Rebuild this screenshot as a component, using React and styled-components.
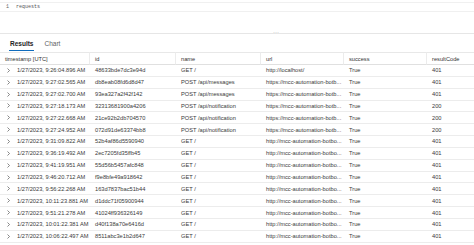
import React from "react";
import styled, { createGlobalStyle } from "styled-components";

const Global = createGlobalStyle`
  html, body { margin: 0; padding: 0; background: #fff; }
  body { font-family: "Liberation Sans", Arial, sans-serif; color: #242424; }
`;

const Page = styled.div`
  width: 474px;
  height: 245px;
  overflow: hidden;
  display: flex;
  flex-direction: column;
  background: #fff;
`;

const Editor = styled.div`
  height: 33px;
  padding-top: 2px;
  box-sizing: border-box;
`;

const EditorLine = styled.div`
  display: flex;
  align-items: center;
  height: 8px;
  border-top: 1px solid #f0f0f0;
  border-bottom: 1px solid #f0f0f0;
  font-family: "Liberation Mono", monospace;
  font-size: 5px;
  color: #555;
`;

const LineNo = styled.span`
  flex: 0 0 16px;
  padding-left: 6px;
  box-sizing: border-box;
  color: #666;
`;

const Splitter = styled.div`
  position: relative;
  height: 1px;
  background: #e6e6e6;
`;

const Grip = styled.span`
  position: absolute;
  left: 273px;
  top: -4px;
  font-size: 6px;
  color: #999;
`;

const Tabs = styled.div`
  display: flex;
  gap: 9px;
  padding: 5px 0 0 9px;
  height: 17px;
  box-sizing: border-box;
`;

const Tab = styled.div`
  font-size: 6.5px;
  font-weight: ${(p) => (p.$active ? 700 : 400)};
  color: ${(p) => (p.$active ? "#242424" : "#616161")};
  padding: 0 1px 3px;
  height: 12px;
  box-sizing: border-box;
  border-bottom: 1.5px solid ${(p) => (p.$active ? "#0f6cbd" : "transparent")};
  display: flex;
  align-items: center;
`;

const Table = styled.div`
  display: grid;
  grid-template-columns: 90px 86px 85px 83px 83px 47px;
  font-size: 5.7px;
  margin-top: 1px;
`;

const HeadCell = styled.div`
  height: 13px;
  display: flex;
  align-items: center;
  padding-left: 5px;
  border-top: 1px solid #e8e8e8;
  border-bottom: 1px solid #e0e0e0;
  border-right: ${(p) => (p.$last ? "none" : "1px solid #ececec")};
  box-sizing: border-box;
  color: #333;
  white-space: nowrap;
`;

const Cell = styled.div`
  height: 11.85px;
  display: flex;
  align-items: center;
  padding-left: ${(p) => (p.$first ? "7px" : "5px")};
  border-bottom: 1px solid #ececec;
  box-sizing: border-box;
  color: #3a3a3a;
  white-space: nowrap;
  overflow: hidden;
`;

const Chevron = styled.svg`
  width: 3px;
  height: 5px;
  margin-right: 7px;
  flex: 0 0 auto;
`;

const rows = [
  ["1/27/2023, 9:26:04.896 AM", "48633bde7dc3e94d", "GET /", "http://localhost/", "401"],
  ["1/27/2023, 9:27:02.565 AM", "db8eab08fd6d8d47", "POST /api/messages", "https://mcc-automation-botb...", "401"],
  ["1/27/2023, 9:27:02.700 AM", "93ea327a2f42f142", "POST /api/messages", "https://mcc-automation-botb...", "401"],
  ["1/27/2023, 9:27:18.173 AM", "32313681900a4206", "POST /api/notification", "https://mcc-automation-botb...", "200"],
  ["1/27/2023, 9:27:22.668 AM", "21ce92b2db704570", "POST /api/notification", "https://mcc-automation-botb...", "200"],
  ["1/27/2023, 9:27:24.952 AM", "072d91de63374bb8", "POST /api/notification", "https://mcc-automation-botb...", "200"],
  ["1/27/2023, 9:31:09.822 AM", "52b4af86d5590940", "GET /", "http://mcc-automation-botbo...", "401"],
  ["1/27/2023, 9:36:19.492 AM", "2ec7205fd35ffb45", "GET /", "http://mcc-automation-botbo...", "401"],
  ["1/27/2023, 9:41:19.951 AM", "55d56b5457afc848", "GET /", "http://mcc-automation-botbo...", "401"],
  ["1/27/2023, 9:46:20.712 AM", "f9e8bfe49a918642", "GET /", "http://mcc-automation-botbo...", "401"],
  ["1/27/2023, 9:56:22.268 AM", "163d7837bac51b44", "GET /", "http://mcc-automation-botbo...", "401"],
  ["1/27/2023, 10:11:23.881 AM", "d1ddc71f05900944", "GET /", "http://mcc-automation-botbo...", "401"],
  ["1/27/2023, 9:51:21.278 AM", "41024ff936326149", "GET /", "http://mcc-automation-botbo...", "401"],
  ["1/27/2023, 10:01:22.381 AM", "d40f138a70e6416d", "GET /", "http://mcc-automation-botbo...", "401"],
  ["1/27/2023, 10:06:22.497 AM", "8511abc3e1b2d647", "GET /", "http://mcc-automation-botbo...", "401"],
];

const headers = ["timestamp [UTC]", "id", "name", "url", "success", "resultCode"];

export default function App() {
  return (
    <Page>
      <Global />
      <Editor>
        <EditorLine>
          <LineNo>1</LineNo>
          <span>requests</span>
        </EditorLine>
      </Editor>
      <Splitter>
        <Grip>···</Grip>
      </Splitter>
      <Tabs>
        <Tab $active>Results</Tab>
        <Tab>Chart</Tab>
      </Tabs>
      <Table>
        {headers.map((h, i) => (
          <HeadCell key={h} $last={i === headers.length - 1}>
            {h}
          </HeadCell>
        ))}
        {rows.map((r, ri) => (
          <React.Fragment key={ri}>
            <Cell $first>
              <Chevron viewBox="0 0 3 5">
                <path d="M0.5 0.5 L2.5 2.5 L0.5 4.5" fill="none" stroke="#555" strokeWidth="0.7" />
              </Chevron>
              {r[0]}
            </Cell>
            <Cell>{r[1]}</Cell>
            <Cell>{r[2]}</Cell>
            <Cell>{r[3]}</Cell>
            <Cell>True</Cell>
            <Cell>{r[4]}</Cell>
          </React.Fragment>
        ))}
      </Table>
    </Page>
  );
}
